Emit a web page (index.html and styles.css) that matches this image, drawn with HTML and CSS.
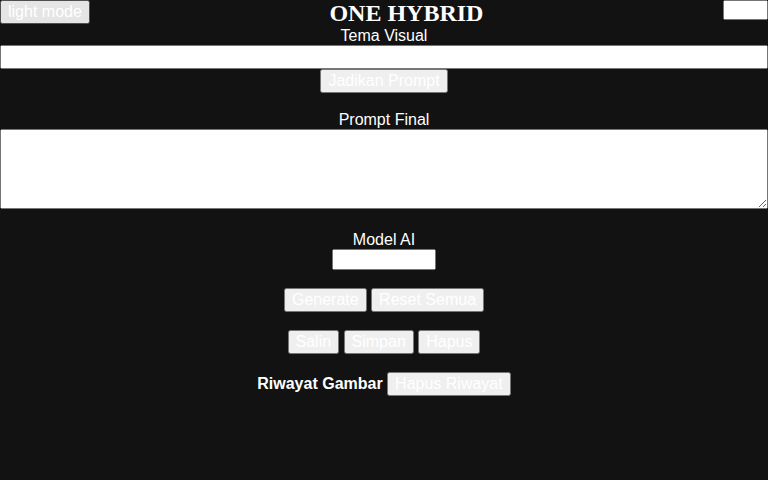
FILE: index.html
```html
<!DOCTYPE html>
<html lang="id">
<head>
<meta charset="utf-8">
<title>ONE HYBRID</title>
<link rel="stylesheet" href="styles.css">
</head>
<body>
<header class="top">
  <button class="btn">light mode</button>
  <h1 class="title">ONE HYBRID</h1>
  <select class="sel lang"><option>ID</option></select>
</header>
<section class="block">
  <label class="lbl" for="tema">Tema Visual</label>
  <input class="field" id="tema" type="text">
  <button class="btn">Jadikan Prompt</button>
</section>
<section class="block gap">
  <label class="lbl" for="prompt">Prompt Final</label>
  <textarea class="area" id="prompt" rows="4"></textarea>
</section>
<section class="block gap-model">
  <label class="lbl" for="model">Model AI</label>
  <select class="sel model" id="model"><option>Flux Schnell</option></select>
</section>
<div class="row">
  <button class="btn">Generate</button>
  <button class="btn">Reset Semua</button>
</div>
<div class="row">
  <button class="btn">Salin</button>
  <button class="btn">Simpan</button>
  <button class="btn">Hapus</button>
</div>
<div class="row">
  <strong class="hist">Riwayat Gambar</strong>
  <button class="btn">Hapus Riwayat</button>
</div>
</body>
</html>
```
FILE: styles.css
```css
html, body {
  background: #121212;
}
body {
  margin: 0;
  color: #ffffff;
  font-family: "Liberation Sans", Arial, sans-serif;
  font-size: 16px;
  text-align: center;
}
.top {
  display: flex;
  align-items: flex-start;
}
.title {
  flex: 1;
  margin: 0;
  font-family: "Liberation Serif", "Times New Roman", serif;
  font-size: 24px;
  font-weight: bold;
  line-height: 27px;
  text-align: center;
}
.btn, .field, .area, .sel {
  font-family: "Liberation Sans", Arial, sans-serif;
  font-size: 16px;
  color: #ffffff;
}
.btn {
  margin: 0;
}
.lbl {
  display: block;
}
.field {
  display: block;
  box-sizing: border-box;
  width: 100%;
  margin: 0;
}
.block.gap {
  margin-top: 18px;
}
.block.gap-model {
  margin-top: 22px;
}
.area {
  display: block;
  box-sizing: border-box;
  width: 100%;
  height: 80px;
  margin: 0;
}
.sel {
  margin: 0;
}
.lang {
  width: 45px;
  height: 20px;
}
.model {
  width: 104px;
  height: 21px;
}
.row {
  margin-top: 18px;
}
.hist {
  font-weight: bold;
}
```
